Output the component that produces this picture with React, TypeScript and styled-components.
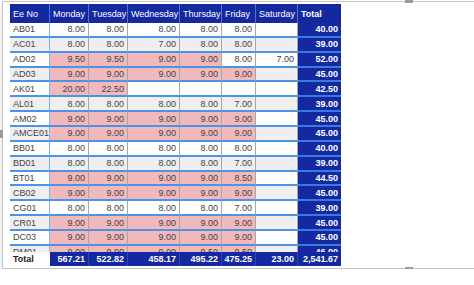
import React from 'react';
import styled, { createGlobalStyle, css } from 'styled-components';

const GlobalStyle = createGlobalStyle`
  html, body {
    margin: 0;
    padding: 0;
    background: #ffffff;
    overflow: hidden;
  }
  body {
    font-family: 'Liberation Sans', Arial, sans-serif;
  }
`;

const NAVY = '#1428a0';
const ROW_LINE = '#4b93e6';

const columns = [
  { key: 'ee', label: 'Ee No', width: 40 },
  { key: 'mon', label: 'Monday', width: 39 },
  { key: 'tue', label: 'Tuesday', width: 39 },
  { key: 'wed', label: 'Wednesday', width: 52 },
  { key: 'thu', label: 'Thursday', width: 42 },
  { key: 'fri', label: 'Friday', width: 34 },
  { key: 'sat', label: 'Saturday', width: 42 },
  { key: 'total', label: 'Total', width: 43 },
];

const gridCols = columns.map((c) => `${c.width}px`).join(' ');

type Rec = { ee: string; days: (number | null)[]; total: number };

const rows: Rec[] = [
  { ee: 'AB01', days: [8, 8, 8, 8, 8, null], total: 40 },
  { ee: 'AC01', days: [8, 8, 7, 8, 8, null], total: 39 },
  { ee: 'AD02', days: [9.5, 9.5, 9, 9, 8, 7], total: 52 },
  { ee: 'AD03', days: [9, 9, 9, 9, 9, null], total: 45 },
  { ee: 'AK01', days: [20, 22.5, null, null, null, null], total: 42.5 },
  { ee: 'AL01', days: [8, 8, 8, 8, 7, null], total: 39 },
  { ee: 'AM02', days: [9, 9, 9, 9, 9, null], total: 45 },
  { ee: 'AMCE01', days: [9, 9, 9, 9, 9, null], total: 45 },
  { ee: 'BB01', days: [8, 8, 8, 8, 8, null], total: 40 },
  { ee: 'BD01', days: [8, 8, 8, 8, 7, null], total: 39 },
  { ee: 'BT01', days: [9, 9, 9, 9, 8.5, null], total: 44.5 },
  { ee: 'CB02', days: [9, 9, 9, 9, 9, null], total: 45 },
  { ee: 'CG01', days: [8, 8, 8, 8, 7, null], total: 39 },
  { ee: 'CR01', days: [9, 9, 9, 9, 9, null], total: 45 },
  { ee: 'DC03', days: [9, 9, 9, 9, 9, null], total: 45 },
  { ee: 'DM01', days: [9, 9, 9, 9.5, 9.5, null], total: 46 },
];

const totals = ['567.21', '522.82', '458.17', '495.22', '475.25', '23.00', '2,541.67'];

const fmt = (n: number | null) => (n === null ? '' : n.toFixed(2));

const Frame = styled.div`
  position: relative;
  margin: 1px 0 0 2px;
  width: 820px;
  height: 264px;
  border: 1px solid #c4c4c4;
  box-shadow: 0 3px 7px rgba(0, 0, 0, 0.13);
  padding: 2px 0 0 7px;
  background: #fff;
`;

const Handle = styled.div<{ $side: 'top' | 'bottom' | 'left' }>`
  position: absolute;
  background: #9b9b9b;
  ${(p) =>
    p.$side === 'left'
      ? css`
          left: -3px;
          top: 128px;
          width: 3px;
          height: 8px;
        `
      : css`
          left: 402px;
          ${p.$side === 'top' ? 'top: -2px;' : 'bottom: -2px;'}
          width: 8px;
          height: 3px;
        `}
`;

const Table = styled.div`
  width: 331px;
  display: flex;
  flex-direction: column;
  font-size: 9px;
  color: #444;
`;

const Row = styled.div`
  display: grid;
  grid-template-columns: ${gridCols};
`;

const Body = styled.div`
  height: 229px;
  overflow: hidden;
`;

const HeadCell = styled.div<{ $bold?: boolean }>`
  height: 19px;
  background: ${NAVY};
  color: #fff;
  font-weight: ${(p) => (p.$bold ? 700 : 400)};
  padding-left: 3px;
  display: flex;
  align-items: center;
  white-space: nowrap;
  overflow: hidden;
  border-right: 1px solid #5570d0;
  &:last-child {
    border-right: none;
  }
`;

type Tone = 'white' | 'gray' | 'pink' | 'navy';

const toneBg: Record<Tone, string> = {
  white: '#ffffff',
  gray: '#efefef',
  pink: '#f2b9bc',
  navy: NAVY,
};

const Cell = styled.div<{ $tone: Tone; $first?: boolean }>`
  height: 14.86px;
  box-sizing: border-box;
  background: ${(p) => toneBg[p.$tone]};
  border-bottom: 2px solid ${ROW_LINE};
  border-right: 1px solid ${(p) => (p.$first ? '#7fb0ea' : '#a7a7a7')};
  display: flex;
  align-items: center;
  justify-content: ${(p) => (p.$first ? 'flex-start' : 'flex-end')};
  padding: 0 3px;
  white-space: nowrap;
  overflow: hidden;
  ${(p) =>
    p.$tone === 'navy' &&
    css`
      color: #fff;
      font-weight: 700;
      border-right: none;
      border-bottom-color: #3b78e0;
    `}
`;

const TotalCell = styled.div<{ $label?: boolean }>`
  height: 14px;
  display: flex;
  align-items: center;
  justify-content: ${(p) => (p.$label ? 'flex-start' : 'flex-end')};
  padding: 0 3px;
  font-weight: 700;
  white-space: nowrap;
  background: ${(p) => (p.$label ? '#fff' : NAVY)};
  color: ${(p) => (p.$label ? '#222' : '#fff')};
  border-right: 1px solid ${(p) => (p.$label ? '#fff' : '#2c46b8')};
  &:last-child {
    border-right: none;
  }
`;

export default function App() {
  return (
    <>
      <GlobalStyle />
      <Frame>
        <Handle $side="top" />
        <Handle $side="bottom" />
        <Handle $side="left" />
        <Table>
          <Row>
            {columns.map((c) => (
              <HeadCell key={c.key} $bold={c.key === 'total'}>
                {c.label}
              </HeadCell>
            ))}
          </Row>
          <Body>
            {rows.map((r, i) => {
              const base: Tone = i % 2 === 0 ? 'white' : 'gray';
              return (
                <Row key={r.ee}>
                  <Cell $tone={base} $first>
                    {r.ee}
                  </Cell>
                  {r.days.map((d, j) => (
                    <Cell key={j} $tone={d !== null && d > 8 ? 'pink' : base}>
                      {fmt(d)}
                    </Cell>
                  ))}
                  <Cell $tone="navy">{fmt(r.total)}</Cell>
                </Row>
              );
            })}
          </Body>
          <Row>
            <TotalCell $label>Total</TotalCell>
            {totals.map((t, i) => (
              <TotalCell key={i}>{t}</TotalCell>
            ))}
          </Row>
        </Table>
      </Frame>
    </>
  );
}
